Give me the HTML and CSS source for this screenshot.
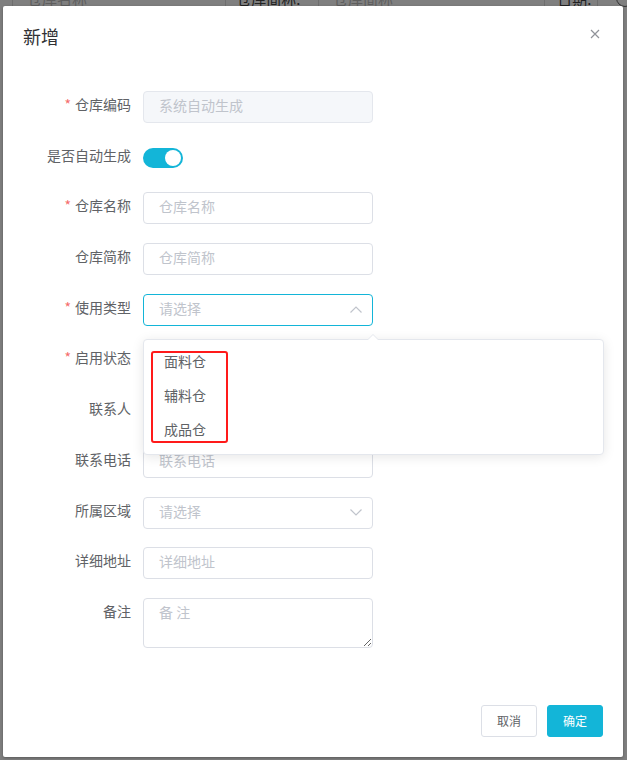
FILE: index.html
```html
<!DOCTYPE html>
<html lang="zh-CN">
<head>
<meta charset="utf-8">
<title>新增</title>
<link rel="stylesheet" href="styles.css">
</head>
<body>
<div class="backdrop">
  <div class="bg-bar">
    <span class="bg-cell bg-c1"><span class="ph">仓库名称</span></span>
    <span class="bg-cell bg-c2"><span class="lbl">仓库简称:</span></span>
    <span class="bg-cell bg-c3"><span class="ph">仓库简称</span></span>
    <span class="bg-cell bg-c4"><span class="lbl">日期:</span></span>
    <span class="bg-cell bg-c5"><span class="circ"></span></span>
  </div>
</div>

<div class="dialog">
  <div class="dlg-header">
    <span class="dlg-title">新增</span>
    <span class="dlg-close">
      <svg width="16" height="16" viewBox="0 0 16 16"><path d="M4 4 L12 12 M12 4 L4 12" stroke="#909399" stroke-width="1.2" fill="none"/></svg>
    </span>
  </div>

  <div class="dlg-body">
    <div class="form-item">
      <label class="form-label"><span class="req">*</span>仓库编码</label>
      <div class="form-content"><div class="input disabled"><span class="ph-text">系统自动生成</span></div></div>
    </div>
    <div class="form-item">
      <label class="form-label">是否自动生成</label>
      <div class="form-content"><span class="switch"><span class="knob"></span></span></div>
    </div>
    <div class="form-item">
      <label class="form-label"><span class="req">*</span>仓库名称</label>
      <div class="form-content"><div class="input"><span class="ph-text">仓库名称</span></div></div>
    </div>
    <div class="form-item">
      <label class="form-label">仓库简称</label>
      <div class="form-content"><div class="input"><span class="ph-text">仓库简称</span></div></div>
    </div>
    <div class="form-item">
      <label class="form-label"><span class="req">*</span>使用类型</label>
      <div class="form-content">
        <div class="input focus"><span class="ph-text">请选择</span>
          <svg class="arrow" width="12" height="7" viewBox="0 0 12 7"><path d="M0.5 6.5 L6 1 L11.5 6.5" stroke="#c0c4cc" stroke-width="1.2" fill="none"/></svg>
        </div>
        <div class="dropdown">
          <span class="pop-arrow"></span>
          <ul class="options">
            <li>面料仓</li>
            <li>辅料仓</li>
            <li>成品仓</li>
          </ul>
          <span class="mark"></span>
        </div>
      </div>
    </div>
    <div class="form-item">
      <label class="form-label"><span class="req">*</span>启用状态</label>
      <div class="form-content"><div class="input"><span class="ph-text">请选择</span></div></div>
    </div>
    <div class="form-item">
      <label class="form-label">联系人</label>
      <div class="form-content"><div class="input"><span class="ph-text">联系人</span></div></div>
    </div>
    <div class="form-item">
      <label class="form-label">联系电话</label>
      <div class="form-content"><div class="input"><span class="ph-text">联系电话</span></div></div>
    </div>
    <div class="form-item">
      <label class="form-label">所属区域</label>
      <div class="form-content">
        <div class="input"><span class="ph-text">请选择</span>
          <svg class="arrow" width="12" height="7" viewBox="0 0 12 7"><path d="M0.5 0.5 L6 6 L11.5 0.5" stroke="#c0c4cc" stroke-width="1.2" fill="none"/></svg>
        </div>
      </div>
    </div>
    <div class="form-item">
      <label class="form-label">详细地址</label>
      <div class="form-content"><div class="input"><span class="ph-text">详细地址</span></div></div>
    </div>
    <div class="form-item">
      <label class="form-label">备注</label>
      <div class="form-content"><textarea class="textarea" placeholder="备 注"></textarea></div>
    </div>
  </div>

  <div class="dlg-footer">
    <button class="btn">取消</button>
    <button class="btn primary">确定</button>
  </div>
</div>
</body>
</html>
```

FILE: styles.css
```css
* { box-sizing: border-box; }
html, body { margin: 0; padding: 0; }
body {
  width: 627px;
  height: 760px;
  overflow: hidden;
  background: #7f7f7f;
  font-family: "Noto Sans CJK SC", "Noto Sans", sans-serif;
  position: relative;
  padding: 6px 4px 0 3px;
}

/* dimmed page behind the dialog */
.backdrop {
  position: absolute;
  left: 0; top: -11px;
  width: 627px;
  height: 20px;
}
.bg-bar { display: flex; height: 20px; font-size: 15px; line-height: 20px; }
.bg-cell { border-left: 1px solid #6e6e6e; padding-left: 14px; white-space: nowrap; overflow: hidden; }
.bg-c1 { margin-left: 12px; width: 214px; }
.bg-c2 { width: 93px; padding-left: 10px; }
.bg-c3 { width: 227px; }
.bg-c4 { width: 53px; padding-left: 12px; }
.bg-c5 { width: 30px; }
.ph { color: #5e5e5e; }
.lbl { color: #222; }
.circ { display: inline-block; width: 18px; height: 18px; border: 1px solid #333; border-radius: 50%; margin-left: 4px; }

.dialog {
  width: 620px;
  height: 751px;
  background: #fff;
  border-radius: 2px;
  box-shadow: 0 1px 3px rgba(0,0,0,.3);
  display: flex;
  flex-direction: column;
  position: relative;
}
.dlg-header {
  padding: 18px 20px 12px;
  position: relative;
}
.dlg-title {
  display: block;
  font-size: 18px;
  line-height: 24px;
  color: #303133;
}
.dlg-close {
  position: absolute;
  top: 20px;
  right: 20px;
  width: 16px;
  height: 16px;
}
.dlg-close svg { display: block; }

.dlg-body {
  padding: 31px 20px 0;
}
.form-item {
  display: flex;
  margin-bottom: 18.7px;
  position: relative;
}
.form-label {
  width: 120px;
  height: 32px;
  padding-right: 12px;
  padding-bottom: 5px;
  text-align: right;
  font-size: 14px;
  line-height: 27px;
  color: #606266;
  white-space: nowrap;
}
.req { color: #f56c6c; margin-right: 4px; }
.form-content {
  width: 230px;
  position: relative;
  display: flex;
  align-items: center;
  min-height: 32px;
}
.input {
  width: 230px;
  height: 32px;
  border: 1px solid #dcdfe6;
  border-radius: 4px;
  padding: 0 15px 4px;
  display: flex;
  align-items: center;
  justify-content: space-between;
  background: #fff;
}
.input.disabled { background: #f5f7fa; border-color: #e4e7ed; }
.input.focus { border-color: #13b5d8; }
.ph-text { font-size: 14px; color: #c0c4cc; line-height: 26px; }
.arrow { display: block; margin-right: -5px; position: relative; top: 2px; }

.switch {
  display: inline-block;
  width: 40px;
  height: 20px;
  border-radius: 10px;
  background: #13b5d8;
  position: relative;
}
.knob {
  position: absolute;
  top: 2px;
  left: 22px;
  width: 16px;
  height: 16px;
  border-radius: 50%;
  background: #fff;
}

.textarea {
  width: 230px;
  height: 50px;
  border: 1px solid #dcdfe6;
  border-radius: 4px;
  padding: 3px 15px;
  font-family: "Noto Sans CJK SC", "Noto Sans", sans-serif;
  font-size: 14px;
  line-height: 21px;
  color: #606266;
  resize: vertical;
  display: block;
  align-self: flex-start;
}
.textarea::placeholder { color: #c0c4cc; }

/* dropdown popper */
.dropdown {
  position: absolute;
  top: 45px;
  left: 0;
  width: 461px;
  background: #fff;
  border: 1px solid #e4e7ed;
  border-radius: 4px;
  box-shadow: 0 2px 12px rgba(0,0,0,.1);
  z-index: 10;
}
.pop-arrow {
  position: absolute;
  top: -6px;
  left: 223px;
  width: 0; height: 0;
  border-left: 6px solid transparent;
  border-right: 6px solid transparent;
  border-bottom: 6px solid #e4e7ed;
}
.pop-arrow::after {
  content: "";
  position: absolute;
  top: 1px;
  left: -5px;
  border-left: 5px solid transparent;
  border-right: 5px solid transparent;
  border-bottom: 5px solid #fff;
}
.options {
  list-style: none;
  margin: 0;
  padding: 6px 0;
}
.options li {
  height: 34px;
  line-height: 30px;
  padding: 0 20px 4px;
  font-size: 14px;
  color: #606266;
}
.mark {
  position: absolute;
  left: 7px;
  top: 11px;
  width: 77px;
  height: 92px;
  border: 2.5px solid #ff1a1a;
  border-radius: 3px;
}

.dlg-footer {
  margin-top: auto;
  padding: 10px 20px 20px;
  display: flex;
  justify-content: flex-end;
  gap: 10px;
}
.btn {
  height: 32px;
  padding: 0 15px 1px;
  font-size: 12px;
  font-family: "Noto Sans CJK SC", "Noto Sans", sans-serif;
  border: 1px solid #dcdfe6;
  border-radius: 3px;
  background: #fff;
  color: #606266;
  line-height: 29px;
}
.btn.primary {
  background: #13b5d8;
  border-color: #13b5d8;
  color: #fff;
}
```
